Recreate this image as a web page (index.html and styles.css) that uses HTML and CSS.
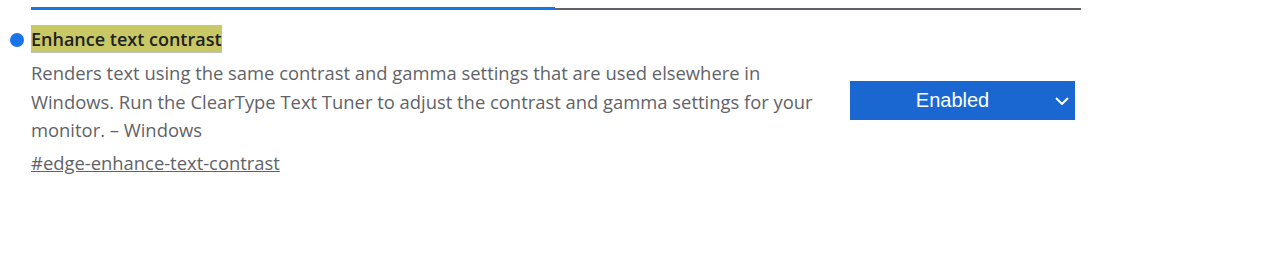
FILE: index.html
```html
<!DOCTYPE html>
<html lang="en">
<head>
<meta charset="utf-8">
<title>Flags</title>
<link rel="stylesheet" href="styles.css">
</head>
<body>
<div class="page">
  <div class="tabbar"><div class="tab-active"></div><div class="tab-rest"></div></div>
  <div class="flag">
    <div class="flag-main">
      <h3 class="flag-title"><span class="dot"></span><span class="hl">Enhance text contrast</span></h3>
      <p class="flag-desc">Renders text using the same contrast and gamma settings that are used elsewhere in Windows. Run the ClearType Text Tuner to adjust the contrast and gamma settings for your monitor. – Windows</p>
      <a class="flag-link" href="#edge-enhance-text-contrast">#edge-enhance-text-contrast</a>
    </div>
    <div class="flag-ctrl">
      <div class="select">
        <span class="select-text">Enabled</span>
        <svg class="chev" width="14" height="8" viewBox="0 0 14 8"><path d="M1 1 L7 7 L13 1" fill="none" stroke="#fff" stroke-width="2"/></svg>
      </div>
    </div>
  </div>
</div>
</body>
</html>
```
FILE: styles.css
```css
* { box-sizing: border-box; }
html, body { margin: 0; padding: 0; background: #fff; }
body { font-family: "Open Sans", "Noto Sans", sans-serif; }
.page { width: 1281px; padding-left: 31px; padding-top: 7px; }
.tabbar { display: flex; align-items: flex-end; width: 1050px; height: 3px; }
.tab-active { width: 524px; height: 3px; background: #1a73e8; }
.tab-rest { flex: 1; height: 2px; background: #5f6368; }
.flag { display: flex; align-items: flex-start; margin-top: 15px; }
.flag-main { width: 800px; }
.flag-title { position: relative; margin: 0; font-size: 18px; font-weight: 600; color: #202124; line-height: 26px; }
.dot { position: absolute; left: -21px; top: 8px; width: 14px; height: 14px; border-radius: 50%; background: #1a73e8; }
.hl { display: inline-block; background: #c8c864; border-top: 1px solid #c4c4a0; border-bottom: 1px solid #c0c0c0; }
.flag-desc { margin: 6px 0 0; font-size: 18.4px; line-height: 28.5px; color: #5f6368; }
.flag-link { display: inline-block; margin-top: 6px; font-size: 18.4px; line-height: 24px; color: #5f6368; text-decoration: underline; }
.flag-ctrl { margin-left: 19px; margin-top: 56px; }
.select { display: flex; align-items: center; width: 225px; height: 39px; background: #1a67d2; color: #fff; padding: 0 6px 0 0; }
.select-text { flex: 1; text-align: center; font-family: "Liberation Sans", Arial, sans-serif; font-size: 20px; }
.chev { display: block; }
```
